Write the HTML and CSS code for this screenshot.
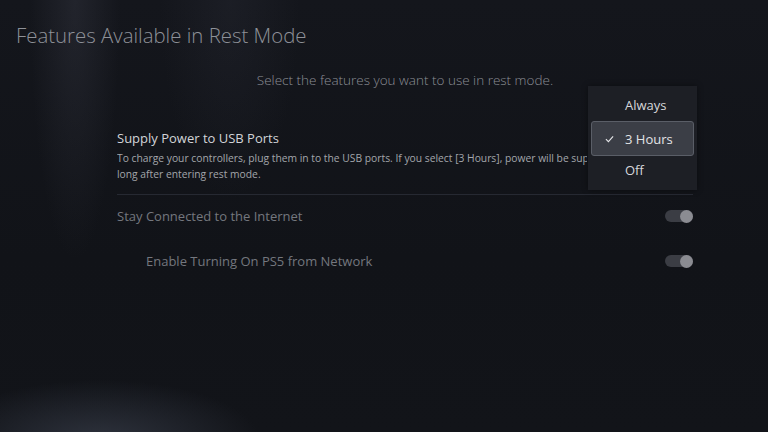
FILE: index.html
```html
<!DOCTYPE html>
<html>
<head>
<meta charset="utf-8">
<link rel="stylesheet" href="styles.css">
</head>
<body>
<div class="screen">
  <h1 class="title">Features Available in Rest Mode</h1>
  <div class="content">
    <p class="subtitle">Select the features you want to use in rest mode.</p>
    <div class="row row-usb">
      <div class="row-label">Supply Power to USB Ports</div>
      <div class="row-desc"><span class="desc-line">To charge your controllers, plug them in to the USB ports. If you select [3 Hours], power will be supplied for that</span><span class="desc-line">long after entering rest mode.</span></div>
    </div>
    <div class="row row-toggle">
      <div class="row-label dim">Stay Connected to the Internet</div>
      <div class="toggle"><span class="knob"></span></div>
    </div>
    <div class="row row-toggle sub">
      <div class="row-label dim">Enable Turning On PS5 from Network</div>
      <div class="toggle"><span class="knob"></span></div>
    </div>
  </div>
  <div class="menu">
    <div class="menu-item">Always</div>
    <div class="menu-item selected">
      <svg class="check" viewBox="0 0 10 8" width="9" height="8"><path d="M1 4.2 L3.8 7 L9 1" fill="none" stroke="#e6e7ea" stroke-width="1.2"/></svg>
      3 Hours
    </div>
    <div class="menu-item last">Off</div>
  </div>
</div>
</body>
</html>
```
FILE: styles.css
```css
html, body {
  margin: 0;
  padding: 0;
}
body {
  width: 768px;
  height: 432px;
  overflow: hidden;
  font-family: "Open Sans", "Noto Sans", sans-serif;
  background: #111319;
}
.screen {
  position: relative;
  width: 768px;
  height: 432px;
  background:
    radial-gradient(ellipse 160px 60px at 100px 440px, rgba(64,70,84,0.6), rgba(64,70,84,0) 100%),
    radial-gradient(ellipse 45px 260px at 75px 0px, rgba(60,62,74,0.35), rgba(60,62,74,0) 100%),
    radial-gradient(ellipse 70px 200px at 230px 0px, rgba(45,47,58,0.3), rgba(45,47,58,0) 100%),
    linear-gradient(180deg, #14161c 0%, #111318 60%, #121419 100%);
}
.title {
  margin: 0;
  padding: 22px 0 0 16px;
  font-size: 20.4px;
  font-weight: 300;
  line-height: 26px;
  color: #8e9198;
}
.content {
  margin-left: 117px;
  width: 576px;
}
.subtitle {
  margin: 23px 0 0 0;
  text-align: center;
  font-size: 13.5px;
  font-weight: 300;
  line-height: 18px;
  color: #8b8e95;
}
.row-usb {
  margin-top: 40px;
  padding-bottom: 12px;
  border-bottom: 1px solid #262932;
}
.row-label {
  font-size: 13px;
  line-height: 18px;
  color: #d2d4d8;
}
.row-label.dim {
  color: #74777e;
}
.row-desc {
  margin-top: 3px;
  font-size: 10.3px;
  line-height: 16px;
  color: #a3a6ab;
  white-space: nowrap;
}
.desc-line {
  display: block;
  width: 470px;
  overflow: hidden;
}
.row-toggle {
  display: flex;
  align-items: center;
  justify-content: space-between;
  height: 18px;
}
.row-usb + .row-toggle {
  margin-top: 12px;
}
.row-toggle.sub {
  margin-top: 27px;
  padding-left: 29px;
}
.toggle {
  position: relative;
  width: 28px;
  height: 12px;
  border-radius: 6px;
  background: #3b3d44;
}
.knob {
  position: absolute;
  right: 0;
  top: -0.5px;
  width: 13px;
  height: 13px;
  border-radius: 50%;
  background: #8b8c92;
}
.menu {
  position: absolute;
  left: 588px;
  top: 86px;
  width: 109px;
  height: 104px;
  background: #1d1f25;
  box-sizing: border-box;
  padding: 3px 3px 2px;
  display: flex;
  flex-direction: column;
  box-shadow: 0 0 6px rgba(0,0,0,0.4);
}
.menu-item {
  position: relative;
  height: 32px;
  display: flex;
  align-items: center;
  padding-left: 34px;
  font-size: 13px;
  color: #d6d7db;
  box-sizing: border-box;
}
.menu-item.selected {
  height: 35px;
  background: #3b3e46;
  border: 1px solid #5a5e67;
  border-radius: 3px;
  padding-left: 33px;
  color: #e3e4e7;
}
.menu-item.last {
  height: 28px;
}
.check {
  position: absolute;
  left: 13px;
  top: 13px;
}
```
